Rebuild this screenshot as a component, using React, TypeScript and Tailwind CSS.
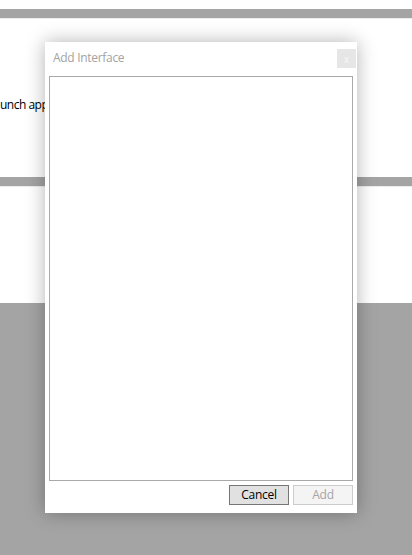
export default function App() {
  return (
    <div
      className="relative h-[555px] w-[412px] overflow-hidden bg-white text-[12px] tracking-[-0.3px]"
      style={{ fontFamily: '"Open Sans", "Noto Sans", sans-serif' }}
    >
      {/* page behind the dialog */}
      <div className="flex h-full flex-col">
        <div className="h-[9px]" />
        <div className="h-[9px] bg-[#a4a4a4]" />
        <div className="h-px bg-[#ececec]" />
        <div className="flex h-[158px] flex-col">
          <p className="mt-[78px] whitespace-nowrap leading-[16px] tracking-[-0.5px] text-black">unch app</p>
        </div>
        <div className="h-[9px] bg-[#a4a4a4]" />
        <div className="h-px bg-[#ececec]" />
        <div className="h-[116px]" />
        <div className="flex-1 bg-[#a4a4a4]" />
      </div>

      {/* Add Interface dialog */}
      <div className="absolute left-[45px] top-[42px] flex h-[471px] w-[312px] flex-col bg-white shadow-[0_0_18px_rgba(0,0,0,0.3)]">
        <div className="flex h-[34px] items-start justify-between pl-2 pr-[1px] pt-[7px]">
          <span className="leading-[17px] text-[#a3a3a3]">Add Interface</span>
          <button className="flex h-[19px] w-[19px] items-center justify-center bg-[#e6e6e6] text-[10px] leading-none text-[#f7f7f7]">
            x
          </button>
        </div>
        <div className="mx-1 h-[405px] border border-[#a9a9a9] bg-white" />
        <div className="mt-1 flex justify-end gap-1 px-1">
          <button className="h-[20px] w-[60px] border border-[#767676] bg-[#e1e1e1] leading-none text-black">
            Cancel
          </button>
          <button className="h-[20px] w-[60px] border border-[#cccccc] bg-[#f4f4f4] leading-none text-[#a5a5a5]">
            Add
          </button>
        </div>
      </div>
    </div>
  );
}
